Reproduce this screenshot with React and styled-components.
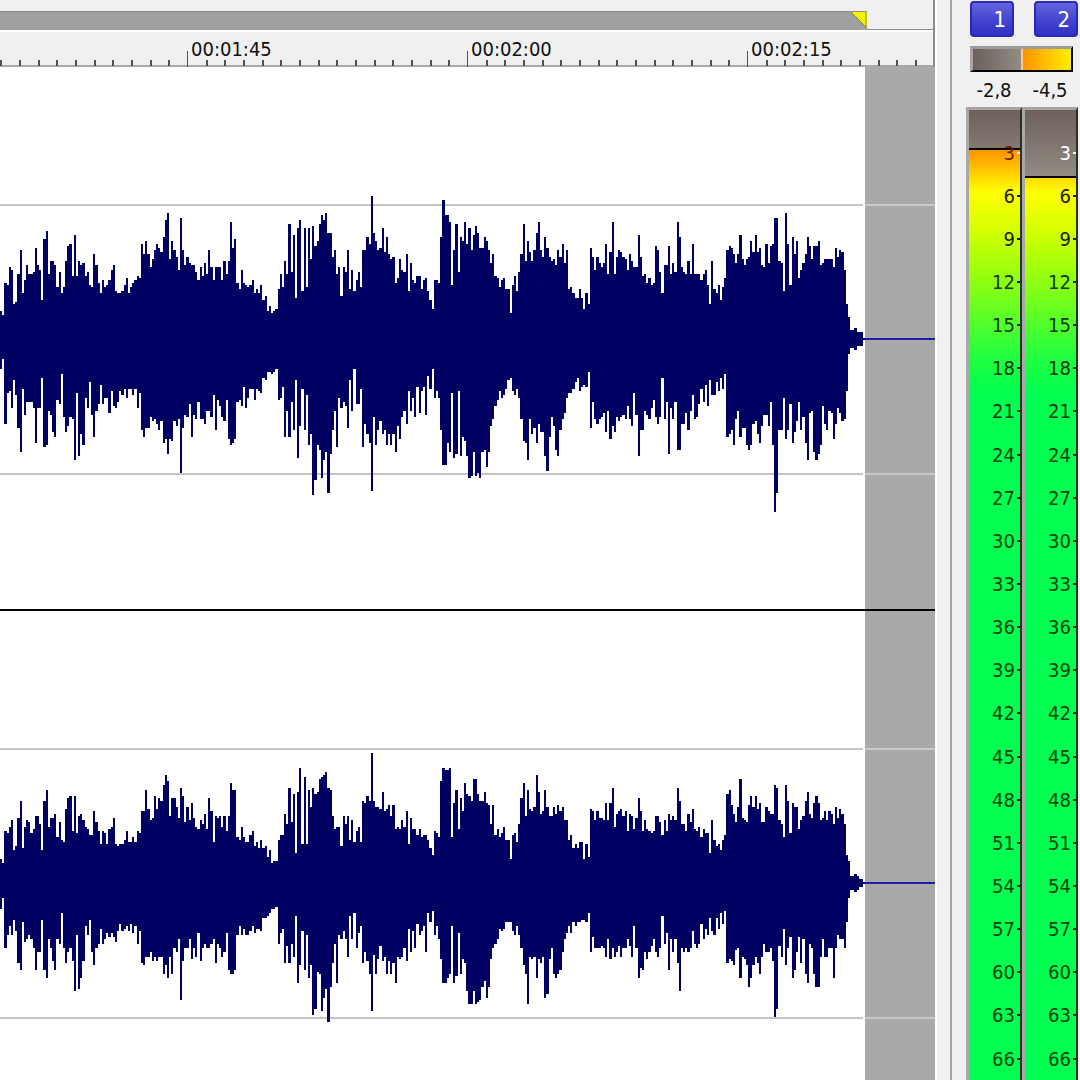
import React from 'react';
import styled, { createGlobalStyle, css } from 'styled-components';

const GlobalStyle = createGlobalStyle`
    * {
        box-sizing: border-box;
    }

    body {
        margin: 0;
        background: #f0f0f0;
        color: #101010;
        font-family: 'DejaVu Sans Condensed', 'Noto Sans', sans-serif;
        font-size: 20px;
        overflow: hidden;
    }
`;

const Window = styled.div`
    display: flex;
    height: 100vh;
`;

const Editor = styled.main`
    flex: 1;
    min-width: 0;
    display: flex;
    flex-direction: column;
    overflow: hidden;
`;

const Header = styled.header`
    flex: none;
    border-right: 2px solid #8c8c8c;
`;

const Overview = styled.div`
    height: 30px;
    display: flex;
    align-items: flex-end;
`;

const OverviewRange = styled.div`
    width: 867px;
    height: 19px;
    flex: none;
    display: flex;
    justify-content: flex-end;
    background: #a0a0a0;
    border-top: 1px solid #8e8e8e;
`;

const OverviewRest = styled.div`
    flex: 1;
    height: 1px;
    background: #8c8c8c;
`;

const Ruler = styled.div`
    height: 37px;
    display: flex;
    flex-direction: column;
    border-top: 2px solid #ffffff;
`;

const RulerLabels = styled.div`
    display: flex;
    height: 27px;
    padding-left: 191px;
`;

const RulerLabel = styled.time`
    width: 280px;
    flex: none;
    line-height: 34px;
`;

const Ticks = styled.svg`
    display: block;
    width: 100%;
    height: 8px;
    overflow: visible;
`;

const Tracks = styled.div`
    flex: 1;
    min-height: 0;
    overflow: hidden;
`;

const Track = styled.section`
    display: flex;
    border-bottom: 2px solid #000000;
`;

const Clip = styled.svg`
    width: 865px;
    height: 542px;
    flex: none;
    background: #ffffff;
`;

const Empty = styled.svg`
    flex: 1;
    min-width: 0;
    height: 542px;
    background: #a9a9a9;
`;

const Splitter = styled.div`
    width: 17px;
    flex: none;
    border-left: 2px solid #ffffff;
    border-right: 2px solid #a3a2a6;
`;

const MeterPanel = styled.aside`
    width: 128px;
    flex: none;
    display: flex;
    flex-direction: column;
    padding-left: 14px;
    padding-right: 2px;
`;

const ChannelButtons = styled.div`
    display: flex;
    justify-content: space-between;
    padding: 1px 0 0 4px;
`;

const ChannelButton = styled.button`
    width: 44px;
    height: 36px;
    padding: 0 6px;
    border: 2px solid #2a2ab4;
    border-radius: 4px;
    background: linear-gradient(#6464de, #4646d0 50%, #3030c4);
    color: #ffffff;
    font: inherit;
    font-size: 22px;
    text-align: right;
`;

const Legend = styled.div`
    display: flex;
    height: 26px;
    margin: 9px 5px 0 4px;
    border: 2px solid #000000;
    border-top: 3px solid #a09a98;
    border-left: 3px solid #a8a4a2;
`;

const LegendPart = styled.div`
    flex: 1;
    ${({ $hot }) =>
        $hot
            ? css`
                  border-left: 2px solid #ffc890;
                  background: linear-gradient(90deg, #ff9400, #ffee00);
              `
            : css`
                  background: linear-gradient(90deg, #6c605c, #928c82);
              `}
`;

const Peaks = styled.div`
    display: flex;
    height: 35px;
`;

const Peak = styled.output`
    flex: 1;
    text-align: center;
    line-height: 36px;
`;

const Meters = styled.div`
    flex: 1;
    min-height: 0;
    display: flex;
`;

const Meter = styled.div`
    flex: 1;
    display: flex;
    flex-direction: column;
    padding-top: 21px;
    border-top: 3px solid #a8a2a0;
    border-left: 3px solid #a8a8a8;
    border-right: 2px solid #283028;
    background:
        linear-gradient(#000000, #000000) 0 ${({ $peak }) => $peak}px / 100% 2px
            no-repeat,
        linear-gradient(#6e605c, #948e84 70px) 0 0 / 100%
            ${({ $peak }) => $peak}px no-repeat,
        linear-gradient(
            #ff7800 0,
            #ff9800 42px,
            #ffff00 82px,
            #d8ff00 118px,
            #94ff10 168px,
            #58ff28 210px,
            #20ff40 248px,
            #00ff50 284px
        );
`;

const Mark = styled.div`
    flex: 1;
    display: flex;
    align-items: center;
    justify-content: flex-end;
    gap: 2px;
    line-height: 20px;
    color: ${({ $color }) => $color};

    &::after {
        content: '';
        width: 3px;
        height: 2px;
        background: ${({ $tick }) => $tick};
    }
`;

const COLUMN = 2.1685;
const MIDDLE = 272;

const LEFT = {
    up: [
        13, 11, 26, 25, 33, 32, 16, 17, 30, 41, 21, 27, 34, 30, 30, 31, 42, 34, 32, 18,
        46, 50, 30, 36, 36, 34, 24, 31, 21, 24, 36, 43, 44, 29, 48, 29, 36, 34, 35, 29,
        31, 25, 24, 39, 34, 26, 21, 27, 24, 25, 27, 32, 34, 22, 21, 21, 22, 25, 28, 21,
        24, 26, 27, 29, 28, 44, 39, 45, 39, 33, 37, 41, 44, 42, 40, 47, 55, 58, 37, 45,
        41, 38, 32, 56, 41, 34, 38, 35, 34, 34, 31, 27, 33, 29, 35, 30, 41, 33, 27, 33,
        33, 33, 27, 36, 30, 36, 54, 42, 46, 26, 23, 32, 26, 25, 24, 25, 27, 21, 23, 21,
        25, 18, 20, 13, 15, 12, 13, 14, 23, 30, 24, 36, 30, 53, 31, 48, 19, 51, 55, 22,
        51, 24, 51, 37, 52, 43, 45, 53, 57, 55, 58, 49, 49, 38, 41, 30, 33, 20, 33, 31,
        41, 23, 32, 22, 27, 31, 24, 41, 41, 47, 44, 66, 49, 45, 41, 42, 51, 40, 47, 39,
        37, 38, 26, 28, 37, 32, 31, 39, 22, 35, 27, 26, 29, 29, 23, 27, 28, 22, 18, 14,
        27, 27, 26, 47, 64, 57, 57, 54, 25, 41, 53, 31, 47, 45, 54, 44, 51, 41, 48, 52,
        49, 42, 42, 47, 45, 41, 35, 39, 29, 28, 24, 27, 28, 23, 23, 12, 25, 29, 22, 31,
        39, 53, 36, 45, 40, 36, 41, 49, 54, 41, 38, 47, 42, 38, 36, 37, 34, 41, 38, 44,
        35, 41, 23, 24, 21, 19, 19, 23, 19, 14, 21, 16, 42, 38, 32, 38, 35, 33, 35, 44,
        30, 40, 54, 30, 38, 41, 40, 38, 37, 32, 39, 36, 33, 33, 48, 38, 29, 30, 26, 28,
        25, 26, 43, 41, 31, 21, 34, 34, 43, 30, 35, 31, 54, 47, 33, 31, 30, 36, 30, 44,
        30, 30, 30, 27, 30, 32, 25, 16, 36, 23, 21, 25, 18, 24, 28, 41, 43, 42, 39, 35,
        39, 48, 37, 34, 37, 38, 45, 40, 48, 40, 42, 34, 33, 44, 35, 43, 44, 56, 56, 36,
        35, 22, 58, 44, 25, 47, 39, 45, 28, 32, 35, 39, 47, 43, 37, 43, 43, 45, 34, 35,
        37, 37, 37, 37, 33, 42, 38, 41, 40, 32, 16, 10, 4, 4, 5, 3, 3, 3,
    ],
    down: [
        14, 9, 39, 25, 24, 32, 19, 26, 41, 52, 23, 35, 29, 29, 29, 32, 48, 32, 32, 18,
        50, 49, 33, 35, 43, 45, 28, 30, 16, 36, 43, 40, 36, 37, 56, 25, 54, 44, 49, 27,
        32, 20, 35, 45, 33, 30, 21, 30, 27, 27, 34, 24, 31, 32, 29, 24, 26, 23, 27, 23,
        23, 26, 23, 32, 25, 42, 45, 41, 41, 36, 38, 37, 39, 42, 38, 48, 46, 53, 46, 47,
        38, 40, 37, 62, 41, 35, 36, 30, 45, 35, 37, 29, 37, 37, 39, 33, 33, 36, 26, 42,
        28, 31, 36, 38, 28, 46, 49, 48, 46, 29, 28, 31, 22, 32, 27, 23, 23, 28, 23, 24,
        25, 18, 19, 15, 15, 16, 15, 14, 28, 27, 22, 45, 33, 45, 29, 42, 19, 55, 40, 23,
        42, 26, 49, 44, 72, 65, 49, 51, 64, 56, 52, 71, 53, 42, 33, 50, 27, 32, 29, 31,
        41, 19, 33, 14, 30, 30, 23, 50, 39, 44, 48, 70, 36, 49, 42, 38, 44, 42, 49, 44,
        49, 44, 52, 40, 46, 36, 33, 39, 24, 33, 27, 36, 22, 34, 24, 22, 35, 17, 23, 14,
        27, 24, 27, 42, 58, 58, 48, 52, 25, 55, 53, 24, 54, 45, 47, 54, 64, 63, 52, 63,
        62, 64, 52, 51, 59, 52, 40, 37, 31, 28, 24, 27, 26, 23, 19, 18, 24, 26, 23, 27,
        37, 47, 48, 56, 37, 44, 41, 48, 39, 43, 43, 54, 61, 45, 36, 40, 51, 54, 42, 37,
        34, 27, 25, 25, 23, 20, 18, 24, 22, 21, 22, 15, 41, 29, 37, 39, 37, 36, 34, 43,
        33, 46, 40, 43, 36, 38, 36, 35, 37, 31, 37, 40, 25, 35, 54, 42, 42, 33, 35, 37,
        32, 28, 36, 39, 36, 18, 37, 29, 53, 32, 37, 29, 51, 51, 39, 39, 34, 42, 33, 26,
        37, 36, 30, 23, 29, 21, 31, 19, 26, 26, 20, 24, 18, 23, 16, 45, 44, 42, 49, 37,
        33, 45, 41, 41, 49, 51, 49, 39, 38, 44, 48, 40, 35, 35, 40, 29, 49, 80, 71, 42,
        42, 27, 46, 42, 30, 48, 43, 38, 29, 42, 36, 48, 56, 34, 33, 52, 56, 53, 49, 31,
        39, 42, 33, 34, 46, 39, 32, 34, 38, 37, 24, 7, 4, 4, 5, 3, 3, 3,
    ],
};

const RIGHT = {
    up: [
        11, 9, 24, 23, 26, 29, 15, 17, 30, 38, 16, 26, 29, 28, 23, 25, 31, 31, 27, 15,
        38, 43, 26, 30, 30, 32, 21, 28, 20, 19, 34, 39, 40, 24, 40, 23, 31, 32, 29, 26,
        25, 22, 22, 33, 28, 24, 18, 24, 23, 18, 25, 26, 30, 18, 17, 18, 18, 20, 24, 19,
        19, 21, 19, 24, 23, 33, 33, 43, 34, 29, 30, 40, 34, 39, 38, 45, 50, 47, 31, 39,
        39, 35, 30, 44, 40, 28, 35, 29, 37, 30, 26, 25, 29, 27, 32, 25, 39, 33, 19, 31,
        30, 31, 26, 31, 24, 31, 46, 43, 43, 21, 20, 26, 21, 19, 19, 22, 24, 17, 19, 16,
        20, 16, 17, 12, 15, 9, 10, 10, 20, 22, 22, 32, 27, 44, 28, 41, 14, 42, 53, 18,
        49, 18, 43, 35, 44, 41, 42, 48, 49, 50, 51, 44, 43, 31, 25, 26, 26, 17, 31, 27,
        31, 20, 29, 19, 24, 26, 19, 38, 37, 40, 38, 60, 38, 35, 35, 34, 42, 33, 34, 36,
        31, 36, 25, 26, 25, 29, 26, 33, 18, 30, 25, 25, 22, 25, 21, 22, 22, 20, 16, 13,
        24, 23, 21, 47, 53, 52, 52, 53, 21, 37, 43, 25, 39, 33, 46, 41, 40, 38, 48, 48,
        41, 38, 38, 42, 37, 36, 27, 36, 22, 25, 21, 23, 26, 20, 20, 11, 22, 23, 19, 27,
        39, 46, 31, 43, 34, 33, 35, 50, 42, 32, 33, 43, 35, 31, 31, 35, 32, 36, 33, 35,
        29, 29, 20, 22, 16, 18, 16, 19, 19, 11, 18, 12, 34, 33, 29, 33, 30, 30, 29, 37,
        29, 37, 44, 26, 32, 33, 34, 31, 33, 24, 32, 31, 25, 30, 39, 33, 24, 29, 25, 24,
        23, 24, 31, 31, 28, 22, 29, 24, 32, 29, 31, 29, 44, 38, 27, 27, 24, 32, 28, 34,
        25, 24, 26, 21, 25, 23, 23, 14, 29, 20, 17, 18, 15, 20, 22, 41, 43, 36, 32, 28,
        35, 48, 30, 29, 28, 36, 40, 35, 40, 34, 37, 28, 28, 35, 33, 32, 32, 45, 44, 29,
        27, 21, 45, 38, 23, 37, 35, 35, 25, 29, 31, 38, 42, 32, 30, 37, 40, 37, 29, 30,
        33, 29, 33, 32, 27, 35, 30, 34, 32, 27, 13, 10, 3, 3, 4, 3, 2, 2,
    ],
    down: [
        12, 7, 30, 24, 20, 24, 17, 22, 37, 40, 18, 27, 26, 24, 26, 30, 40, 32, 32, 17,
        40, 44, 26, 30, 36, 40, 26, 28, 14, 30, 37, 32, 30, 36, 50, 24, 49, 44, 36, 20,
        24, 17, 32, 38, 30, 28, 21, 28, 26, 23, 25, 23, 25, 27, 22, 19, 22, 21, 20, 22,
        19, 23, 20, 28, 22, 37, 38, 34, 34, 32, 36, 34, 36, 34, 34, 42, 38, 44, 34, 42,
        30, 32, 26, 54, 36, 30, 30, 26, 35, 30, 34, 23, 36, 30, 28, 30, 30, 28, 26, 37,
        28, 30, 34, 32, 23, 40, 42, 42, 40, 24, 20, 24, 21, 24, 24, 22, 20, 23, 21, 21,
        22, 16, 16, 15, 14, 12, 12, 11, 28, 23, 21, 37, 29, 37, 28, 34, 15, 46, 38, 22,
        40, 24, 44, 38, 61, 58, 41, 42, 59, 53, 49, 64, 48, 37, 28, 46, 24, 26, 22, 26,
        34, 15, 26, 14, 30, 23, 20, 37, 32, 36, 42, 59, 33, 42, 35, 29, 36, 34, 42, 36,
        42, 37, 46, 34, 35, 34, 30, 36, 21, 32, 22, 30, 19, 24, 22, 20, 32, 14, 18, 13,
        24, 20, 26, 35, 46, 46, 44, 42, 20, 46, 43, 23, 42, 35, 37, 50, 56, 56, 50, 56,
        55, 54, 48, 45, 53, 48, 35, 30, 28, 26, 21, 22, 21, 18, 18, 18, 22, 24, 20, 24,
        30, 38, 42, 56, 34, 35, 34, 44, 35, 37, 34, 53, 51, 35, 30, 42, 44, 42, 40, 32,
        26, 23, 20, 23, 18, 20, 18, 18, 17, 17, 18, 14, 32, 25, 30, 30, 30, 29, 30, 34,
        26, 35, 30, 34, 32, 29, 34, 30, 30, 26, 29, 34, 20, 30, 44, 39, 40, 32, 35, 32,
        29, 26, 32, 34, 30, 15, 28, 23, 40, 26, 32, 26, 37, 50, 30, 32, 30, 32, 30, 22,
        28, 30, 28, 19, 26, 21, 24, 16, 22, 24, 16, 21, 14, 19, 13, 37, 35, 36, 38, 31,
        30, 44, 34, 35, 38, 48, 44, 38, 34, 37, 42, 34, 28, 32, 32, 30, 36, 62, 58, 29,
        34, 21, 38, 30, 25, 44, 40, 32, 25, 37, 26, 42, 46, 28, 30, 42, 48, 48, 34, 26,
        34, 34, 30, 30, 44, 30, 24, 26, 26, 30, 18, 7, 3, 3, 4, 3, 2, 2,
    ],
};

// one closed rect per sample column, snapped to whole pixels
const toPath = ({ up, down }) =>
    up
        .map((value, i) => {
            const left = Math.round(i * COLUMN);
            const right = Math.round((i + 1) * COLUMN);
            const top = Math.round(MIDDLE - value * COLUMN);
            const bottom = Math.round(MIDDLE + down[i] * COLUMN);
            return `M${left} ${top}H${right}V${bottom}H${left}Z`;
        })
        .join('');

const TIMES = ['00:01:45', '00:02:00', '00:02:15'];
const TICKS = Array.from({ length: 50 }, (_, i) => i - 10);
const LEVELS = Array.from({ length: 22 }, (_, i) => (i + 1) * 3);

const TimeRuler = () => (
    <Ruler>
        <RulerLabels>
            {TIMES.map((time) => (
                <RulerLabel key={time}>{time}</RulerLabel>
            ))}
        </RulerLabels>
        <Ticks shapeRendering="crispEdges" aria-hidden="true">
            <rect y="6" width="100%" height="2" fill="#a8a8a8" />
            {TICKS.map((i) => {
                const major = i % 15 === 0;
                return (
                    <rect
                        key={i}
                        x={Math.round(187 + (i * 280) / 15)}
                        y={major ? -8 : 1}
                        width={major ? 1 : 2}
                        height={major ? 16 : 6}
                        fill="#505050"
                    />
                );
            })}
        </Ticks>
    </Ruler>
);

const WaveTrack = ({ label, samples }) => (
    <Track aria-label={label}>
        <Clip shapeRendering="crispEdges">
            <rect y="137" width="863" height="2" fill="#c4c4c4" />
            <rect y="406" width="863" height="2" fill="#c4c4c4" />
            <path d={toPath(samples)} fill="#000062" />
            <rect x="861" y="271" width="4" height="2" fill="#000062" />
        </Clip>
        <Empty shapeRendering="crispEdges">
            <rect y="137" width="100%" height="2" fill="#c8c8c8" />
            <rect y="406" width="100%" height="2" fill="#c8c8c8" />
            <rect y="271" width="100%" height="2" fill="#1c1ca8" />
        </Empty>
    </Track>
);

const levelColor = (level) => {
    if (level < 12) return '#1c2000';
    if (level < 24) return '#0c3800';
    return '#004408';
};

const LevelMeter = ({ peak, first, firstTick }) => (
    <Meter $peak={peak}>
        {LEVELS.map((level, i) => (
            <Mark
                key={level}
                $color={i === 0 ? first : levelColor(level)}
                $tick={i === 0 ? firstTick : '#002004'}
            >
                {level}
            </Mark>
        ))}
    </Meter>
);

const App = () => {
    return (
        <>
            <GlobalStyle />
            <Window>
                <Editor>
                    <Header>
                        <Overview>
                            <OverviewRange>
                                <svg width="16" height="16" aria-hidden="true">
                                    <path d="M0 0H16V16Z" fill="#f4f400" />
                                    <path
                                        d="M0 0L16 16M15 0V16"
                                        fill="none"
                                        stroke="#8a8a30"
                                    />
                                </svg>
                            </OverviewRange>
                            <OverviewRest />
                        </Overview>
                        <TimeRuler />
                    </Header>
                    <Tracks>
                        <WaveTrack label="Left" samples={LEFT} />
                        <WaveTrack label="Right" samples={RIGHT} />
                    </Tracks>
                </Editor>
                <Splitter />
                <MeterPanel>
                    <ChannelButtons>
                        <ChannelButton type="button">1</ChannelButton>
                        <ChannelButton type="button">2</ChannelButton>
                    </ChannelButtons>
                    <Legend>
                        <LegendPart />
                        <LegendPart $hot />
                    </Legend>
                    <Peaks>
                        <Peak>-2,8</Peak>
                        <Peak>-4,5</Peak>
                    </Peaks>
                    <Meters>
                        <LevelMeter peak={38} first="#6a2400" firstTick="#ffffff" />
                        <LevelMeter peak={66} first="#ffffff" firstTick="#ffffff" />
                    </Meters>
                </MeterPanel>
            </Window>
        </>
    );
};

export default App;
